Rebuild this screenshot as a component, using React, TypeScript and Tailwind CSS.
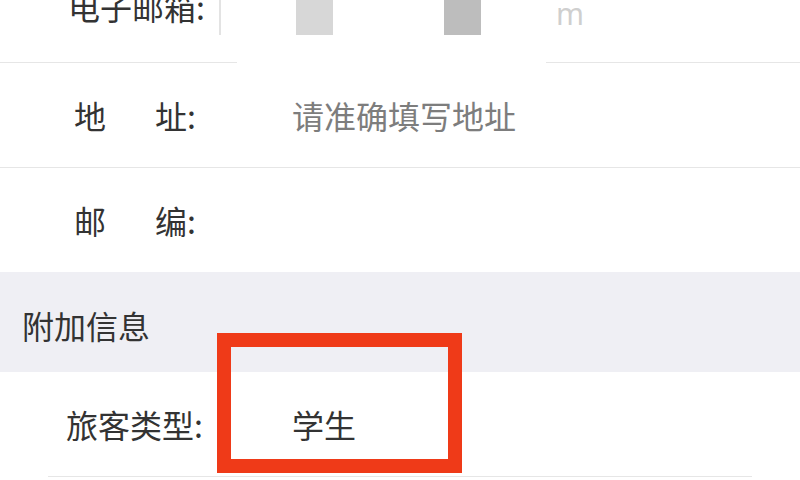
import React from "react";

const font = { fontFamily: '"Noto Sans CJK SC", "Noto Sans", sans-serif' };

export default function App() {
  return (
    <div
      className="relative w-[800px] h-[480px] overflow-hidden bg-white text-[32px] leading-none text-[#333333]"
      style={font}
    >
      {/* Row 1: 电子邮箱 */}
      <div className="-mt-[42px] h-[105px] flex flex-col">
        <div className="flex-1 flex items-center pl-[66px] pb-[8px] relative">
          <div className="w-[153px] pl-[2px]">电子邮箱:</div>
          <div className="self-start mt-[42px] flex items-start">
            <div className="w-[2px] h-[35px] bg-[#e3e3e3]" />
            <div className="ml-[75px] w-[37px] h-[35px] bg-[#d7d7d7]" />
            <div className="ml-[111px] w-[37px] h-[35px] bg-[#bdbdbd]" />
            <div className="ml-[75px] -mt-[1px] text-[30px] text-[#cfcfcf]" style={{ fontFamily: '"Noto Sans", sans-serif' }}>
              m
            </div>
          </div>
        </div>
        <div className="flex h-[1px]">
          <div className="w-[237px] bg-[#e6e6e6]" />
          <div className="w-[309px]" />
          <div className="flex-1 bg-[#e6e6e6]" />
        </div>
      </div>

      {/* Row 2: 地址 */}
      <div className="h-[105px] border-b border-[#e6e6e6] flex items-center pl-[66px]">
        <div className="w-[226px] flex">
          <span className="ml-[8px]">地</span>
          <span className="ml-[49px]">址:</span>
        </div>
        <div className="text-[#7d7d7d]">请准确填写地址</div>
      </div>

      {/* Row 3: 邮编 */}
      <div className="h-[104px] flex items-center pl-[66px]">
        <div className="w-[226px] flex">
          <span className="ml-[8px]">邮</span>
          <span className="ml-[49px]">编:</span>
        </div>
      </div>

      {/* Section header */}
      <div className="h-[100px] bg-[#efeff4] flex items-center pl-[22px] pt-[6px]">
        附加信息
      </div>

      {/* Row 4: 旅客类型 */}
      <div className="h-[104px] flex items-center pl-[66px]">
        <div className="w-[226px]">旅客类型:</div>
        <div>学生</div>
      </div>
      <div className="mx-[48px] h-[1px] bg-[#e6e6e6]" />

      {/* Red annotation box */}
      <div className="absolute left-[217px] top-[333px] w-[245px] h-[140px] border-[14px] border-[#ef3a18]" />
    </div>
  );
}
